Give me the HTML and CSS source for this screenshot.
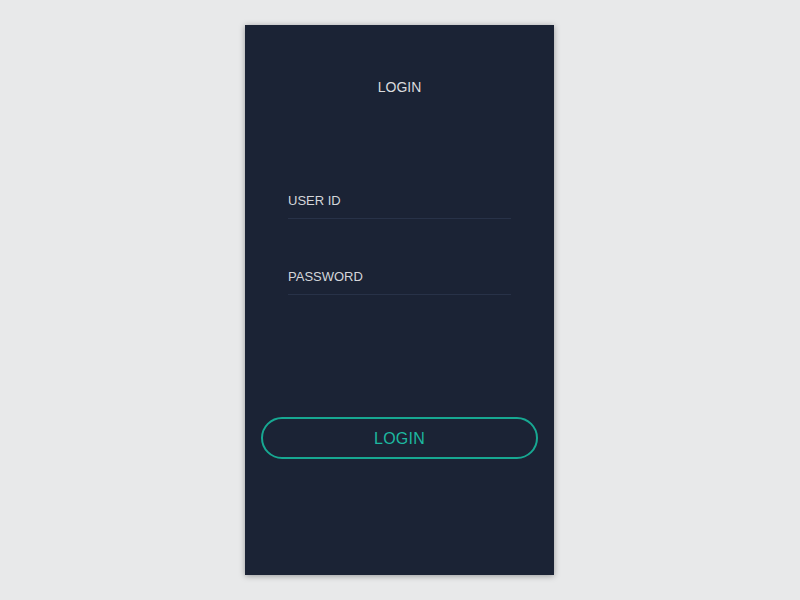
FILE: index.html
```html
<!DOCTYPE html>
<html>
<head>
<meta charset="utf-8">
<link rel="stylesheet" href="styles.css">
</head>
<body>
<div class="panel">
  <div class="title">LOGIN</div>
  <div class="fields">
    <div class="field">USER ID</div>
    <div class="field">PASSWORD</div>
  </div>
  <div class="button">LOGIN</div>
</div>
</body>
</html>
```
FILE: styles.css
```css
html, body {
  margin: 0;
}
body {
  background: #e8e9ea;
  padding: 25px 0 0 245px;
  height: 600px;
  box-sizing: border-box;
  font-family: "Liberation Sans", Arial, sans-serif;
}
.panel {
  width: 309px;
  height: 550px;
  box-sizing: border-box;
  background: #1b2335;
  box-shadow: 0 1px 6px rgba(0, 0, 0, 0.35);
  padding: 54px 16px 0;
  display: flex;
  flex-direction: column;
}
.title {
  text-align: center;
  color: #dadbde;
  font-size: 14px;
  line-height: 16px;
}
.fields {
  margin: 98px 27px 0;
  display: flex;
  flex-direction: column;
  gap: 50px;
}
.field {
  color: #d4d6da;
  font-size: 13px;
  line-height: 16px;
  padding-bottom: 9px;
  border-bottom: 1px solid #283248;
}
.button {
  margin-top: 122px;
  height: 42px;
  box-sizing: border-box;
  border: 2px solid #17a892;
  border-radius: 21px;
  color: #1db8a0;
  font-size: 16px;
  line-height: 39px;
  text-align: center;
  letter-spacing: 0.2px;
}
```
